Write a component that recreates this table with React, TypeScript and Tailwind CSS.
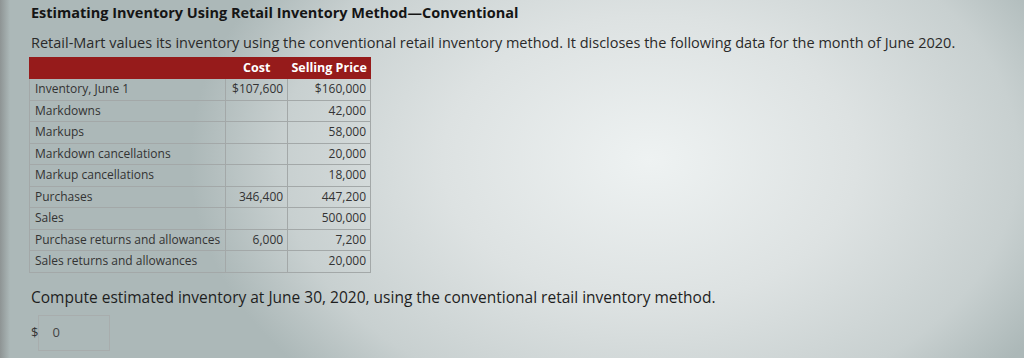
const rows: [string, string, string][] = [
  ['Inventory, June 1', '$107,600', '$160,000'],
  ['Markdowns', '', '42,000'],
  ['Markups', '', '58,000'],
  ['Markdown cancellations', '', '20,000'],
  ['Markup cancellations', '', '18,000'],
  ['Purchases', '346,400', '447,200'],
  ['Sales', '', '500,000'],
  ['Purchase returns and allowances', '6,000', '7,200'],
  ['Sales returns and allowances', '', '20,000'],
];

export default function App() {
  return (
    <div className="relative h-[358px] w-[1024px] overflow-hidden bg-[radial-gradient(ellipse_460px_320px_at_650px_160px,#eef2f2_0%,#dde2e2_45%,#c8d0d0_80%,#acb8b8_100%)] font-['Open_Sans',sans-serif] text-[#1a1a1a]">
      <div className="absolute inset-y-0 left-0 w-[10px] bg-gradient-to-r from-[#8e9494] to-transparent" />
      <div className="flex flex-col pl-[31px] pt-[3px]">
        <h1 className="text-[14.5px] font-bold leading-[20px] text-[#151515]">
          Estimating Inventory Using Retail Inventory Method—Conventional
        </h1>
        <p className="mt-[11px] text-[14.5px] leading-[18px] text-[#2a2a2a]">
          Retail-Mart values its inventory using the conventional retail inventory method. It discloses the following data for the month of June 2020.
        </p>
        <table className="-ml-[2px] mt-[5px] w-[342px] border-collapse text-[12px] leading-[20px] text-[#333]">
          <thead>
            <tr className="bg-[#961b1b] text-[12.5px] text-white">
              <th className="h-[19px] w-[197px] border border-[#961b1b]" />
              <th className="w-[62px] border border-[#961b1b] text-center font-bold">Cost</th>
              <th className="w-[83px] border border-[#961b1b] text-center font-bold">Selling Price</th>
            </tr>
          </thead>
          <tbody>
            {rows.map(([label, cost, price]) => (
              <tr key={label}>
                <td className="h-[21.5px] border border-[#a3a8a8] pl-[5px]">{label}</td>
                <td className="border border-[#a3a8a8] pr-[4px] text-right">{cost}</td>
                <td className="border border-[#a3a8a8] pr-[4px] text-right">{price}</td>
              </tr>
            ))}
          </tbody>
        </table>
        <p className="mt-[14px] text-[15.5px] leading-[20px] text-[#1e1e1e]">
          Compute estimated inventory at June 30, 2020, using the conventional retail inventory method.
        </p>
        <div className="mt-[8px] flex items-center">
          <span className="text-[13px] text-[#333]">$</span>
          <div className="flex h-[36px] w-[72px] items-center border border-[#a8adad] pl-[13px] text-[13px] text-[#444]">
            0
          </div>
        </div>
      </div>
    </div>
  );
}
